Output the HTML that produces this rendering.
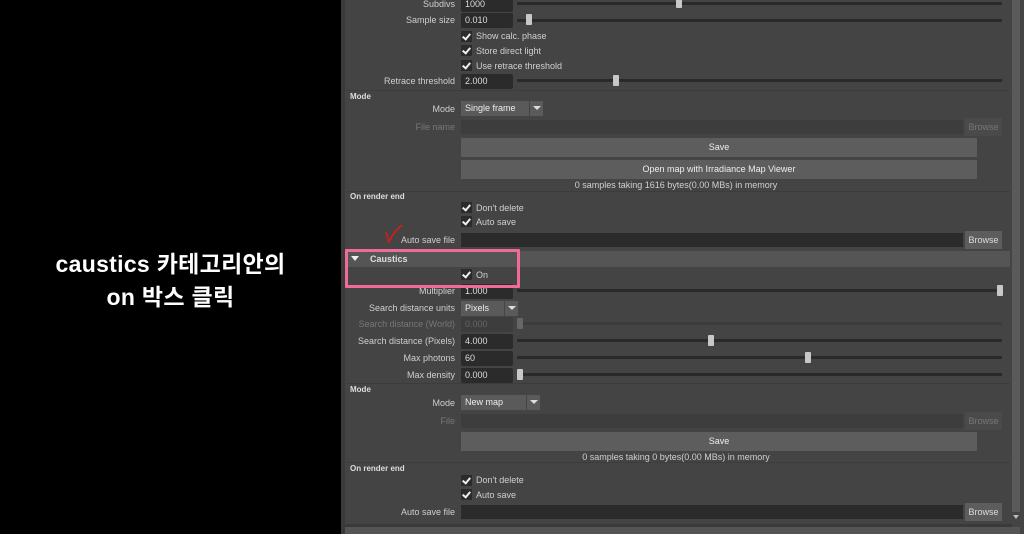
<!DOCTYPE html>
<html><head><meta charset="utf-8"><style>
*{margin:0;padding:0;box-sizing:border-box}
body{width:1024px;height:534px;background:#000;position:relative;overflow:hidden;font-family:"Liberation Sans","Noto Sans CJK KR",sans-serif;font-size:9px;color:#d0d0d0}
.a{position:absolute}
#panel{left:341px;top:0;width:683px;height:534px;background:#444}
.lbl{position:absolute;right:569px;text-align:right;white-space:nowrap;line-height:12px;color:#cfcfcf}
.dim{color:#777}
.inp{position:absolute;left:461px;width:52px;height:15px;background:#2b2b2b;border-radius:2px;line-height:15px;padding-left:4px;color:#ddd}
.trk{position:absolute;left:517px;width:485px;height:3px;background:#2a2a2a}
.hd{position:absolute;width:6px;height:11px;background:#c8c8c8;border-radius:1px}
.cb{position:absolute;left:461px;width:11px;height:11px;background:#2b2b2b}
.cb:after{content:"";position:absolute;left:3px;top:1px;width:3px;height:6px;border-right:2px solid #eee;border-bottom:2px solid #eee;transform:rotate(40deg)}
.ct{position:absolute;left:476px;line-height:12px;color:#d0d0d0}
.sec{position:absolute;left:350px;font-weight:bold;font-size:8px;color:#ddd}
.btn{position:absolute;left:461px;width:516px;height:19px;background:#5d5d5d;text-align:center;line-height:19px;color:#eee}
.fld{position:absolute;left:461px;width:502px;height:14px;background:#3d3d3d}
.fld.dk{background:#2b2b2b}
.br{position:absolute;left:965px;width:37px;height:18px;background:#4a4a4a;text-align:center;line-height:18px;color:#777}
.br.on{background:#5d5d5d;color:#ddd}
.dd{position:absolute;left:461px;height:15px;background:#5a5a5a;line-height:15px;padding-left:4px;color:#eee}
.dd i{position:absolute;right:0;top:0;width:14px;height:15px;background:#5a5a5a;border-left:1px solid #444}
.dd i:after{content:"";position:absolute;left:3px;top:5px;border-left:4px solid transparent;border-right:4px solid transparent;border-top:4px solid #ddd}
.line{position:absolute;left:346px;width:664px;height:1px;background:#3c3c3c}
.info{position:absolute;left:461px;width:430px;text-align:center;line-height:12px}
.big{position:absolute;width:341px;left:0;text-align:center;color:#fff;font-weight:bold;font-size:23px;line-height:33px;letter-spacing:0.3px}
</style></head><body>
<div class="big" style="top:248px">caustics 카테고리안의<br>on 박스 클릭</div>
<div class="a" id="panel"></div>
<div class="a" style="left:341px;top:0;width:4px;height:534px;background:#3a3a3a"></div>
<div class="a" style="left:1012px;top:0;width:8px;height:512px;background:#5a5a5a"></div>
<div class="a" style="left:1013px;top:515px;border-left:3px solid transparent;border-right:3px solid transparent;border-top:4px solid #bbb"></div>
<div class="a" style="left:345px;top:524px;width:667px;height:3px;background:#3a3a3a"></div>
<div class="a" style="left:345px;top:527px;width:675px;height:7px;background:#555"></div>

<div class="lbl" style="top:-2px">Subdivs</div><div class="inp" style="top:-3px">1000</div><div class="trk" style="top:2px"></div><div class="hd" style="left:676px;top:-3px"></div>
<div class="lbl" style="top:14px">Sample size</div><div class="inp" style="top:13px">0.010</div><div class="trk" style="top:19px"></div><div class="hd" style="left:526px;top:14px"></div>
<div class="cb" style="top:31px"></div><div class="ct" style="top:30px">Show calc. phase</div>
<div class="cb" style="top:45px"></div><div class="ct" style="top:45px">Store direct light</div>
<div class="cb" style="top:60px"></div><div class="ct" style="top:60px">Use retrace threshold</div>
<div class="lbl" style="top:75px">Retrace threshold</div><div class="inp" style="top:74px">2.000</div><div class="trk" style="top:79px"></div><div class="hd" style="left:613px;top:75px"></div>
<div class="line" style="top:90px"></div>
<div class="sec" style="top:92px">Mode</div>
<div class="lbl" style="top:103px">Mode</div><div class="dd" style="top:101px;width:82px">Single frame<i></i></div>
<div class="lbl dim" style="top:121px">File name</div><div class="fld" style="top:120px"></div><div class="br" style="top:118px">Browse</div>
<div class="btn" style="top:138px">Save</div>
<div class="btn" style="top:160px">Open map with Irradiance Map Viewer</div>
<div class="info" style="top:179px">0 samples taking 1616 bytes(0.00 MBs) in memory</div>
<div class="line" style="top:191px"></div>
<div class="sec" style="top:192px">On render end</div>
<div class="cb" style="top:202px"></div><div class="ct" style="top:202px">Don't delete</div>
<div class="cb" style="top:216px"></div><div class="ct" style="top:216px">Auto save</div>
<div class="lbl" style="top:234px">Auto save file</div><div class="fld dk" style="top:233px"></div><div class="br on" style="top:231px">Browse</div>
<div class="a" style="left:346px;top:251px;width:664px;height:16px;background:#555"></div>
<div class="a" style="left:351px;top:256px;border-left:4px solid transparent;border-right:4px solid transparent;border-top:5px solid #eee"></div>
<div class="a" style="left:370px;top:254px;font-weight:bold;color:#ddd;font-size:9px">Caustics</div>
<div class="cb" style="top:269px"></div><div class="ct" style="top:269px">On</div>
<div class="lbl" style="top:285px">Multiplier</div><div class="inp" style="top:284px">1.000</div><div class="trk" style="top:289px"></div><div class="hd" style="left:997px;top:285px"></div>
<div class="lbl" style="top:302px">Search distance units</div><div class="dd" style="top:301px;width:57px">Pixels<i></i></div>
<div class="lbl dim" style="top:318px">Search distance (World)</div><div class="inp dim" style="top:317px;background:#3d3d3d;color:#666">0.000</div><div class="trk" style="top:322px;background:#3c3c3c"></div><div class="hd" style="left:517px;top:318px;background:#666"></div>
<div class="lbl" style="top:335px">Search distance (Pixels)</div><div class="inp" style="top:334px">4.000</div><div class="trk" style="top:339px"></div><div class="hd" style="left:708px;top:335px"></div>
<div class="lbl" style="top:352px">Max photons</div><div class="inp" style="top:351px">60</div><div class="trk" style="top:356px"></div><div class="hd" style="left:805px;top:352px"></div>
<div class="lbl" style="top:369px">Max density</div><div class="inp" style="top:368px">0.000</div><div class="trk" style="top:373px"></div><div class="hd" style="left:517px;top:369px"></div>
<div class="line" style="top:383px"></div>
<div class="sec" style="top:385px">Mode</div>
<div class="lbl" style="top:397px">Mode</div><div class="dd" style="top:395px;width:79px">New map<i></i></div>
<div class="lbl dim" style="top:415px">File</div><div class="fld" style="top:414px"></div><div class="br" style="top:412px">Browse</div>
<div class="btn" style="top:432px">Save</div>
<div class="info" style="top:451px">0 samples taking 0 bytes(0.00 MBs) in memory</div>
<div class="line" style="top:462px"></div>
<div class="sec" style="top:464px">On render end</div>
<div class="cb" style="top:475px"></div><div class="ct" style="top:474px">Don't delete</div>
<div class="cb" style="top:489px"></div><div class="ct" style="top:489px">Auto save</div>
<div class="lbl" style="top:506px">Auto save file</div><div class="fld dk" style="top:505px"></div><div class="br on" style="top:503px">Browse</div>
<div class="a" style="left:345px;top:249px;width:175px;height:39px;border:3px solid #f06b9a;border-radius:1px"></div>
<svg class="a" style="left:383px;top:222px" width="22" height="24"><path d="M3 10 L6 20 Q10 10 19 3" stroke="#e01818" stroke-width="1.5" fill="none"/></svg>
</body></html>
